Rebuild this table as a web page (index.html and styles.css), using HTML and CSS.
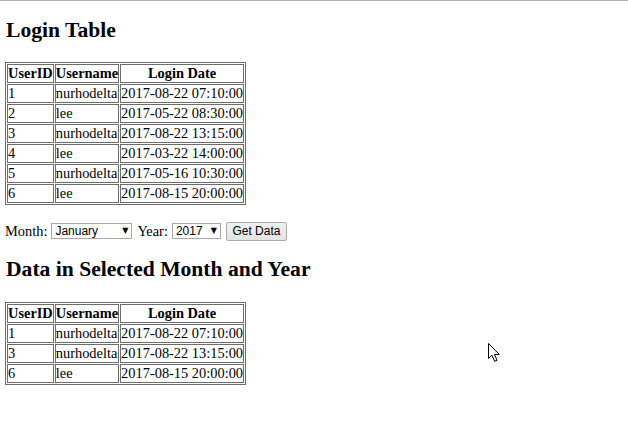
FILE: index.html
```html
<!DOCTYPE html>
<html>
<head>
<meta charset="utf-8">
<link rel="stylesheet" href="styles.css">
</head>
<body>
<div class="page">
  <h2 class="title">Login Table</h2>
  <table class="grid">
    <tr><th>UserID</th><th>Username</th><th class="c">Login Date</th></tr>
    <tr><td>1</td><td>nurhodelta</td><td>2017-08-22 07:10:00</td></tr>
    <tr><td>2</td><td>lee</td><td>2017-05-22 08:30:00</td></tr>
    <tr><td>3</td><td>nurhodelta</td><td>2017-08-22 13:15:00</td></tr>
    <tr><td>4</td><td>lee</td><td>2017-03-22 14:00:00</td></tr>
    <tr><td>5</td><td>nurhodelta</td><td>2017-05-16 10:30:00</td></tr>
    <tr><td>6</td><td>lee</td><td>2017-08-15 20:00:00</td></tr>
  </table>
  <form class="filter">
    <label class="lbl">Month:</label>
    <span class="sel sel-month"><select><option>January</option></select><span class="arrow">▼</span></span>
    <label class="lbl">Year:</label>
    <span class="sel sel-year"><select><option>2017</option></select><span class="arrow">▼</span></span>
    <button type="button" class="btn">Get Data</button>
  </form>
  <h2 class="title title2">Data in Selected Month and Year</h2>
  <table class="grid">
    <tr><th>UserID</th><th>Username</th><th class="c">Login Date</th></tr>
    <tr><td>1</td><td>nurhodelta</td><td>2017-08-22 07:10:00</td></tr>
    <tr><td>3</td><td>nurhodelta</td><td>2017-08-22 13:15:00</td></tr>
    <tr><td>6</td><td>lee</td><td>2017-08-15 20:00:00</td></tr>
  </table>
  <svg class="cursor" width="13" height="20" viewBox="0 0 13 20">
    <path d="M0.5 0.5 L0.5 15.5 L4 12.2 L6.6 18.3 L9 17.3 L6.5 11.4 L11.3 11.4 Z" fill="#fff" stroke="#000" stroke-width="1" stroke-linejoin="miter"/>
  </svg>
</div>
</body>
</html>
```

FILE: styles.css
```css
html, body {
  margin: 0;
  padding: 0;
  background: #fff;
}
.page {
  position: relative;
  border-top: 1px solid #b0b0b0;
  padding: 0 5px;
  height: 435px;
  font-family: "Liberation Serif", "Times New Roman", serif;
  font-size: 14.4px;
  color: #000;
}
.title {
  font-size: 21.6px;
  font-weight: bold;
  line-height: 28px;
  margin: 15px 0 18px 1px;
}
.title2 {
  margin-top: 13px;
  margin-bottom: 19px;
}
.grid {
  border: 1px solid #6e6e6e;
  border-spacing: 1px;
  border-collapse: separate;
}
.grid th, .grid td {
  border: 1px solid #6e6e6e;
  padding: 0;
  line-height: 17px;
  text-align: left;
  white-space: nowrap;
}
.grid th.c {
  text-align: center;
}
.filter {
  display: flex;
  align-items: center;
  margin-top: 15px;
  height: 22px;
}
.lbl {
  margin-right: 4px;
}
.sel {
  position: relative;
  display: inline-block;
  margin-right: 5px;
}
.sel select {
  -webkit-appearance: none;
  appearance: none;
  display: block;
  height: 16px;
  box-sizing: border-box;
  border: 1px solid #a9a9a9;
  border-radius: 0;
  background: #fff;
  font-family: "Liberation Sans", Arial, sans-serif;
  font-size: 12px;
  line-height: 14px;
  padding: 0 0 0 3px;
  color: #000;
}
.sel-month select { width: 81px; }
.sel-year select { width: 49px; }
.arrow {
  position: absolute;
  right: 4px;
  top: 2px;
  font-family: "DejaVu Sans", sans-serif;
  font-size: 8px;
  line-height: 12px;
  pointer-events: none;
}
.btn {
  height: 19px;
  width: 61px;
  box-sizing: border-box;
  border: 1px solid #acacac;
  border-radius: 2px;
  background: linear-gradient(#f0f0f0, #e3e3e3);
  font-family: "Liberation Sans", Arial, sans-serif;
  font-size: 12px;
  padding: 0;
  color: #000;
}
.cursor {
  position: absolute;
  left: 488px;
  top: 342px;
}
```
